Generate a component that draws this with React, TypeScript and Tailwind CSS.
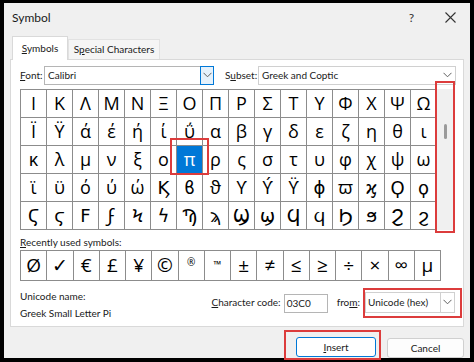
import React from "react";

const rows = [
  "ΙΚΛΜΝΞΟΠΡΣΤΥΦΧΨΩ",
  "ΪΫάέήίΰαβγδεζηθι",
  "κλμνξοπρςστυφχψω",
  "ϊϋόύώϏϐϑϒϓϔϕϖϗϘϙ",
  "ϚϛϜϝϞϟϠϡϢϣϤϥϦϧϨϩ",
];

const recent = ["Ø", "✓", "€", "£", "¥", "©", "®", "™", "±", "≠", "≤", "≥", "÷", "×", "∞", "μ"];

const ui = "font-['Lato','Open_Sans',sans-serif]";
const sym = "font-['Open_Sans','DejaVu_Sans',sans-serif]";

function Chevron() {
  return (
    <svg width="9" height="6" viewBox="0 0 9 6">
      <path d="M0.5 0.8 L4.5 4.8 L8.5 0.8" fill="none" stroke="#606060" strokeWidth="1" />
    </svg>
  );
}

export default function App() {
  return (
    <div className={`relative w-[474px] h-[362px] bg-black pt-[3px] px-[4px] pb-[4px] text-[#1a1a1a] ${ui}`}>
      <div className="h-full bg-[#f0f0f0] flex flex-col">
        {/* title bar */}
        <div className="h-[30px] flex items-center pl-[8px] pr-[14px]">
          <span className="text-[12px]">Symbol</span>
          <span className="ml-auto text-[12px] text-[#333]">?</span>
          <svg className="ml-[31px]" width="11" height="11" viewBox="0 0 11 11">
            <path d="M0.5 0.5 L10.5 10.5 M10.5 0.5 L0.5 10.5" stroke="#333" strokeWidth="1.1" />
          </svg>
        </div>

        {/* tabs */}
        <div className="mt-[3px] pl-[8px] flex items-end h-[23px] text-[10px]">
          <div className="h-[24px] w-[56px] bg-white border border-b-0 border-[#d9d9d9] flex items-center justify-center relative z-10 -mb-px">
            <span><u>S</u>ymbols</span>
          </div>
          <div className="h-[20px] w-[92px] bg-[#f5f5f5] border border-b-0 border-[#e2e2e2] flex items-center justify-center">
            <span>S<u>p</u>ecial Characters</span>
          </div>
        </div>

        {/* panel */}
        <div className="mx-[6px] h-[269px] bg-white border border-[#d9d9d9] flex flex-col text-[10px]">
          <div className="mt-[6px] flex items-center h-[19px]">
            <span className="ml-[9px] w-[24px]"><u>F</u>ont:</span>
            <div className="w-[170px] h-[19px] border border-[#b5b5b5] flex items-center">
              <span className="pl-[3px] flex-1">Calibri</span>
              <div className="w-[14px] h-[19px] -mr-px bg-[#e5f1fb] border border-[#0078d7] flex items-center justify-center">
                <Chevron />
              </div>
            </div>
            <span className="ml-[11px] w-[33px]">S<u>u</u>bset:</span>
            <div className="w-[198px] h-[19px] border border-[#d0d0d0] flex items-center">
              <span className="pl-[3px] flex-1">Greek and Coptic</span>
              <div className="w-[16px] flex items-center justify-center">
                <Chevron />
              </div>
            </div>
          </div>

          {/* character grid */}
          <div className="mt-[4px] ml-[9px] flex">
            <div className={`w-[417px] grid grid-cols-16 gap-px p-px bg-[#8c8c8c] ${sym}`}>
              {rows.map((r, ri) =>
                Array.from(r).map((c, ci) => {
                  const sel = ri === 2 && ci === 6;
                  return (
                    <div
                      key={ri + "-" + ci}
                      className={`h-[27px] flex items-center justify-center text-[18px] leading-none ${
                        sel ? "bg-[#0078d7] text-white" : "bg-white text-black"
                      }`}
                    >
                      {c}
                    </div>
                  );
                })
              )}
            </div>
            <div className="w-[16px] bg-[#f0f0f0] relative">
              <div className="absolute left-[7px] top-[35px] w-[3px] h-[15px] rounded-full bg-[#9a9a9a]" />
            </div>
          </div>

          <div className="mt-[5px] ml-[9px] h-[14px] leading-[14px]">
            <u>R</u>ecently used symbols:
          </div>
          <div className={`mt-[1px] ml-[9px] w-[421px] grid grid-cols-16 gap-px p-px bg-[#8c8c8c] ${sym}`}>
            {recent.map((c, i) => (
              <div
                key={i}
                className={`h-[29px] bg-white flex justify-center text-black leading-none ${
                  c === "®" ? "items-start pt-[6px] text-[10px]" : c === "™" ? "items-start pt-[8px] text-[10px] font-bold" : "items-center text-[19px]"
                }`}
              >
                {c}
              </div>
            ))}
          </div>

          <div className="flex">
            <div className="ml-[9px] pt-[8px]">
              <div className="leading-[14px]">Unicode name:</div>
              <div className="mt-[3px] leading-[14px]">Greek Small Letter Pi</div>
            </div>
            <div className="ml-auto mr-[8px] mt-[11px] flex items-center h-[21px]">
              <span><u>C</u>haracter code:</span>
              <div className="ml-[3px] mt-[3px] w-[44px] h-[19px] border border-[#b5b5b5] flex items-center pl-[2px]">
                03C0
              </div>
              <span className="ml-[9px]">fro<u>m</u>:</span>
              <div className="ml-[5px] w-[90px] h-[21px] border border-[#d0d0d0] flex items-center">
                <span className="pl-[2px] flex-1">Unicode (hex)</span>
                <div className="w-[14px] h-full border-l border-[#d0d0d0] flex items-center justify-center">
                  <Chevron />
                </div>
              </div>
            </div>
          </div>
        </div>

        {/* buttons */}
        <div className="flex-1 flex items-start justify-end pt-[10px] pr-[6px] gap-[11px] text-[10px]">
          <button className="w-[80px] h-[20px] bg-white border border-[#0078d7] rounded-[3px]">
            <u>I</u>nsert
          </button>
          <button className="mt-px w-[77px] h-[20px] bg-[#fdfdfd] border border-[#d0d0d0] rounded-[3px]">
            Cancel
          </button>
        </div>
      </div>

      {/* annotation boxes */}
      <div className="absolute left-[435px] top-[81px] w-[20px] h-[152px] border-2 border-[#dc3c3c]" />
      <div className="absolute left-[170px] top-[138px] w-[39px] h-[37px] border-2 border-[#dc3c3c]" />
      <div className="absolute left-[363px] top-[288px] w-[99px] h-[30px] border-2 border-[#dc3c3c]" />
      <div className="absolute left-[284px] top-[330px] w-[97px] h-[30px] border-2 border-[#dc3c3c]" />
    </div>
  );
}
